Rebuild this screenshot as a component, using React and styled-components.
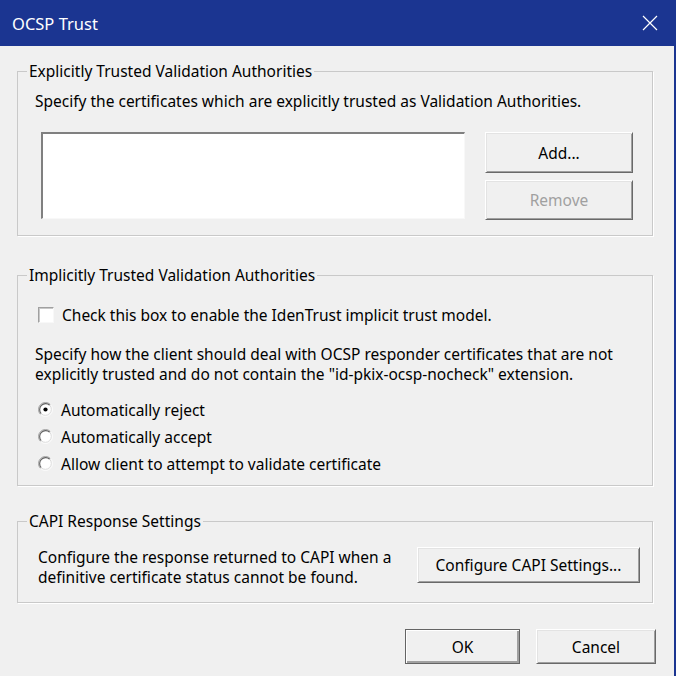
import React from 'react';
import styled, { createGlobalStyle } from 'styled-components';

const GlobalStyle = createGlobalStyle`
  html, body {
    margin: 0;
    padding: 0;
    background: #f0f0f0;
  }
  body {
    font-family: "Noto Sans", "Open Sans", sans-serif;
    font-size: 15.5px;
    color: #000;
  }
`;

const Window = styled.div`
  width: 674px;
  height: 676px;
  background: #f0f0f0;
  border-right: 2px solid #1b3591;
  display: flex;
  flex-direction: column;
`;

const TitleBar = styled.div`
  height: 46px;
  flex-shrink: 0;
  background: #1b3591;
  display: flex;
  align-items: center;
  justify-content: space-between;
  padding: 0 16px 0 12px;
  color: #fff;
  font-size: 16.5px;
`;

const CloseIcon = () => (
  <svg width="16" height="16" viewBox="0 0 16 16">
    <path d="M1 1 L15 15 M15 1 L1 15" stroke="#fff" strokeWidth="1.2" fill="none" />
  </svg>
);

const Body = styled.div`
  display: flex;
  flex-direction: column;
  padding: 15px 21px 0 17px;
`;

const Group = styled.fieldset`
  margin: 0 0 ${p => p.$after || 0}px 0;
  padding: 0 17px;
  border: 1px solid #c9c9c9;
  box-shadow: 1px 1px 0 #fff;
  min-width: 0;
  height: ${p => p.$h}px;
  box-sizing: border-box;
`;

const Legend = styled.legend`
  margin-left: -8px;
  padding: 0 2px;
  line-height: 20px;
`;

const Text = styled.p`
  margin: ${p => p.$top || 0}px 0 0 0;
  line-height: ${p => p.$lh || 19}px;
  white-space: nowrap;
`;

const ListRow = styled.div`
  display: flex;
  gap: 20px;
  margin: 21px 0 0 6px;
`;

const ListBox = styled.div`
  width: 424px;
  height: 87px;
  box-sizing: border-box;
  background: #fff;
  border-style: solid;
  border-width: 2px 1px 1px 2px;
  border-color: #808080 #f8f8f8 #f8f8f8 #808080;
`;

const ButtonStack = styled.div`
  display: flex;
  flex-direction: column;
  gap: 7px;
`;

const Button = styled.button`
  width: ${p => p.$w}px;
  height: ${p => p.$h || 40}px;
  box-sizing: border-box;
  font-family: inherit;
  font-size: 15.5px;
  color: ${p => (p.disabled ? '#a0a0a0' : '#000')};
  background: #f0f0f0;
  border: 1px solid;
  border-color: ${p => (p.$default ? '#646464' : '#fff #696969 #696969 #fff')};
  box-shadow: ${p =>
    p.$default
      ? 'inset 1px 1px 0 #fff, inset -2px -2px 0 #a0a0a0'
      : 'inset 1px 1px 0 #e3e3e3, inset -1px -1px 0 #a0a0a0'};
  padding: 0;
`;

const OptionList = styled.div`
  margin-top: 12px;
`;

const OptionRow = styled.label`
  display: flex;
  align-items: center;
  gap: 8px;
  height: 27px;
  margin-left: ${p => p.$indent || 3}px;
  margin-top: ${p => p.$top || 0}px;
`;

const CheckBox = styled.span`
  width: 16px;
  height: 16px;
  box-sizing: border-box;
  background: #fff;
  border-style: solid;
  border-width: 1px;
  border-color: #a0a0a0 #f8f8f8 #f8f8f8 #a0a0a0;
  box-shadow: inset 1px 1px 0 #c8c8c8;
`;

const Radio = ({ checked }) => (
  <svg width="15" height="15" viewBox="0 0 15 15">
    <circle cx="7.5" cy="7.5" r="6.5" fill="#fff" />
    <path d="M2.55 12.45 A7 7 0 0 1 12.45 2.55" stroke="#a0a0a0" strokeWidth="1" fill="none" />
    <path d="M3.26 11.74 A6 6 0 0 1 11.74 3.26" stroke="#5f5f5f" strokeWidth="1.1" fill="none" />
    <path d="M12.45 2.55 A7 7 0 0 1 2.55 12.45" stroke="#fcfcfc" strokeWidth="1" fill="none" />
    <path d="M11.74 3.26 A6 6 0 0 1 3.26 11.74" stroke="#dcdcdc" strokeWidth="1" fill="none" />
    {checked && <circle cx="7.5" cy="7.5" r="2.1" fill="#000" />}
  </svg>
);

const CapiRow = styled.div`
  display: flex;
  justify-content: space-between;
  align-items: flex-start;
  margin: 16px -5px 0 3px;
`;

const Footer = styled.div`
  display: flex;
  justify-content: flex-end;
  gap: 16px;
  padding: 26px 18px 0 0;
`;

export default function App() {
  return (
    <>
      <GlobalStyle />
      <Window>
        <TitleBar>
          <span>OCSP Trust</span>
          <CloseIcon />
        </TitleBar>
        <Body>
          <Group $h={175} $after={29}>
            <Legend>Explicitly Trusted Validation Authorities</Legend>
            <Text $top={11}>Specify the certificates which are explicitly trusted as Validation Authorities.</Text>
            <ListRow>
              <ListBox />
              <ButtonStack>
                <Button $w={148} $h={41}>Add...</Button>
                <Button $w={148} $h={40} disabled>Remove</Button>
              </ButtonStack>
            </ListRow>
          </Group>

          <Group $h={221} $after={25}>
            <Legend>Implicitly Trusted Validation Authorities</Legend>
            <OptionRow $indent={3} $top={16}>
              <CheckBox />
              <span>Check this box to enable the IdenTrust implicit trust model.</span>
            </OptionRow>
            <Text $top={17} $lh={19.5}>
              Specify how the client should deal with OCSP responder certificates that are not
              <br />
              explicitly trusted and do not contain the "id-pkix-ocsp-nocheck" extension.
            </Text>
            <OptionList>
              <OptionRow $indent={3}>
                <Radio checked />
                <span>Automatically reject</span>
              </OptionRow>
              <OptionRow $indent={3}>
                <Radio />
                <span>Automatically accept</span>
              </OptionRow>
              <OptionRow $indent={3}>
                <Radio />
                <span>Allow client to attempt to validate certificate</span>
              </OptionRow>
            </OptionList>
          </Group>

          <Group $h={92}>
            <Legend>CAPI Response Settings</Legend>
            <CapiRow>
              <Text $lh={20} $top={0}>
                Configure the response returned to CAPI when a
                <br />
                definitive certificate status cannot be found.
              </Text>
              <Button $w={223} $h={36}>Configure CAPI Settings...</Button>
            </CapiRow>
          </Group>
        </Body>
        <Footer>
          <Button $w={115} $h={35} $default>OK</Button>
          <Button $w={120} $h={35}>Cancel</Button>
        </Footer>
      </Window>
    </>
  );
}
